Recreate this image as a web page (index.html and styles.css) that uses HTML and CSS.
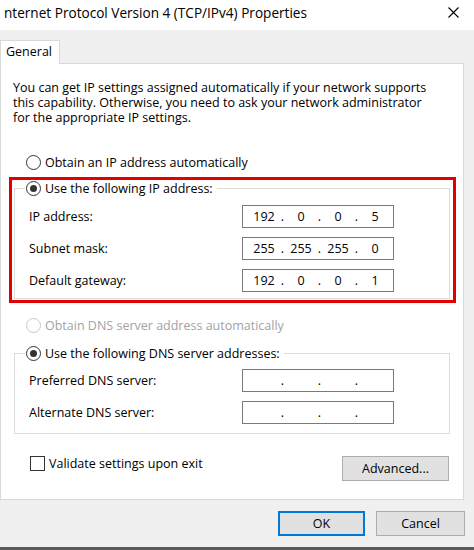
FILE: index.html
```html
<!DOCTYPE html>
<html>
<head>
<meta charset="utf-8">
<link rel="stylesheet" href="styles.css">
</head>
<body>
<div class="window">
  <div class="titlebar">
    <span class="title">nternet Protocol Version 4 (TCP/IPv4) Properties</span>
    <svg class="close" viewBox="0 0 11 11" width="11" height="11"><path d="M0.5 0.5L10.5 10.5M10.5 0.5L0.5 10.5" stroke="#000" stroke-width="1.1" fill="none"/></svg>
  </div>
  <div class="content">
    <div class="tabs"><div class="tab">General</div></div>
    <div class="panel">
      <p class="intro">You can get IP settings assigned automatically if your network supports<br>this capability. Otherwise, you need to ask your network administrator<br>for the appropriate IP settings.</p>
      <div class="radio-row obtain-ip"><span class="radio"></span><span>Obtain an IP address automatically</span></div>
      <div class="highlight">
        <fieldset class="group">
          <legend><span class="legend-inner"><span class="radio checked"></span><span>Use the following IP address:</span></span></legend>
          <div class="rows">
            <div class="field-row"><span class="label">IP address:</span>
              <div class="ipbox"><span class="oct">192</span><span class="dot">.</span><span class="oct">0</span><span class="dot">.</span><span class="oct">0</span><span class="dot">.</span><span class="oct">5</span></div></div>
            <div class="field-row"><span class="label">Subnet mask:</span>
              <div class="ipbox"><span class="oct">255</span><span class="dot">.</span><span class="oct">255</span><span class="dot">.</span><span class="oct">255</span><span class="dot">.</span><span class="oct">0</span></div></div>
            <div class="field-row"><span class="label">Default gateway:</span>
              <div class="ipbox"><span class="oct">192</span><span class="dot">.</span><span class="oct">0</span><span class="dot">.</span><span class="oct">0</span><span class="dot">.</span><span class="oct">1</span></div></div>
          </div>
        </fieldset>
      </div>
      <div class="radio-row obtain-dns disabled"><span class="radio"></span><span>Obtain DNS server address automatically</span></div>
      <fieldset class="group dns">
        <legend><span class="legend-inner"><span class="radio checked"></span><span>Use the following DNS server addresses:</span></span></legend>
        <div class="rows">
          <div class="field-row"><span class="label">Preferred DNS server:</span>
            <div class="ipbox"><span class="oct"></span><span class="dot">.</span><span class="oct"></span><span class="dot">.</span><span class="oct"></span><span class="dot">.</span><span class="oct"></span></div></div>
          <div class="field-row"><span class="label">Alternate DNS server:</span>
            <div class="ipbox"><span class="oct"></span><span class="dot">.</span><span class="oct"></span><span class="dot">.</span><span class="oct"></span><span class="dot">.</span><span class="oct"></span></div></div>
        </div>
      </fieldset>
      <div class="bottom-row">
        <div class="check-row"><span class="checkbox"></span><span>Validate settings upon exit</span></div>
        <button class="btn advanced">Advanced...</button>
      </div>
    </div>
    <div class="footer">
      <button class="btn ok">OK</button>
      <button class="btn cancel">Cancel</button>
    </div>
  </div>
</div>
</body>
</html>
```

FILE: styles.css
```css
* { box-sizing: border-box; }
html, body { margin: 0; padding: 0; }
body {
  width: 474px;
  height: 550px;
  overflow: hidden;
  background: #f0f0f0;
  font-family: "Open Sans", "Noto Sans", sans-serif;
  font-size: 12.5px;
  color: #000;
}
.window {
  width: 474px;
  height: 550px;
  display: flex;
  flex-direction: column;
  background: #f0f0f0;
  border-bottom: 3px solid #5a5a5a;
}
.titlebar {
  height: 30px;
  flex: none;
  background: #fff;
  display: flex;
  justify-content: space-between;
  align-items: flex-start;
  padding: 4px 15px 0 4px;
}
.title {
  font-size: 13.6px;
  line-height: 18px;
  white-space: nowrap;
}
.close {
  margin-top: 3px;
  display: block;
}
.content {
  flex: 1;
  padding-top: 10px;
}
.tabs {
  display: flex;
  height: 23px;
}
.tab {
  width: 60px;
  height: 24px;
  background: #fff;
  border: 1px solid #d9d9d9;
  border-bottom: none;
  padding-left: 5px;
  line-height: 22px;
  position: relative;
  z-index: 1;
}
.panel {
  width: 464px;
  height: 437px;
  background: #fff;
  border: 1px solid #d9d9d9;
}
.intro {
  margin: 16px 0 0 12px;
  line-height: 15px;
  white-space: nowrap;
}
.radio-row {
  display: flex;
  align-items: center;
  gap: 4px;
  height: 16px;
  white-space: nowrap;
}
.obtain-ip { margin: 29px 0 0 25px; }
.obtain-dns { margin: 14px 0 0 25px; }
.disabled { color: #a3a3a3; }
.disabled .radio { border-color: #c8c8c8; }
.radio {
  width: 15px;
  height: 15px;
  border: 1px solid #333;
  border-radius: 50%;
  background: #fff;
  display: flex;
  align-items: center;
  justify-content: center;
  flex: none;
}
.radio.checked::after {
  content: "";
  width: 7px;
  height: 7px;
  border-radius: 50%;
  background: #333;
}
.highlight {
  margin: 7px 0 0 8px;
  width: 447px;
  border: 3px solid #e50000;
  padding: 0 3px 1px 2px;
}
.group {
  margin: 0;
  width: 436px;
  min-width: 0;
  border: 1px solid #dcdcdc;
  padding: 9px 0 6px 14px;
}
.group legend {
  padding: 0 4px 0 1px;
  margin-left: -4px;
  height: 16px;
}
.legend-inner {
  display: flex;
  align-items: center;
  gap: 4px;
  height: 16px;
  white-space: nowrap;
}
.group.dns {
  margin: 12px 0 0 13px;
  padding: 8px 0 9px 14px;
}
.rows {
  display: flex;
  flex-direction: column;
  gap: 9px;
}
.field-row {
  display: flex;
  align-items: center;
  height: 23px;
}
.label {
  width: 213px;
  flex: none;
}
.ipbox {
  width: 152px;
  height: 23px;
  border: 1px solid #7a7a7a;
  background: #fff;
  display: flex;
  align-items: center;
  padding-left: 6px;
}
.oct {
  width: 30px;
  text-align: center;
}
.dot {
  width: 7px;
  text-align: center;
}
.bottom-row {
  display: flex;
  justify-content: space-between;
  align-items: flex-start;
  margin-top: 22px;
  padding: 0 14px 0 29px;
}
.check-row {
  display: flex;
  align-items: center;
  gap: 4px;
  height: 15px;
  white-space: nowrap;
}
.checkbox {
  width: 15px;
  height: 15px;
  border: 1px solid #333;
  background: #fff;
  flex: none;
}
.btn {
  font-family: "Open Sans", "Noto Sans", sans-serif;
  font-size: 12.5px;
  color: #000;
  background: #e1e1e1;
  border: 1px solid #adadad;
  height: 25px;
  padding: 0;
  margin: 0;
}
.advanced { width: 107px; }
.footer {
  display: flex;
  justify-content: flex-end;
  gap: 11px;
  padding: 11px 9px 0 0;
}
.ok {
  width: 87px;
  border: 2px solid #0078d7;
}
.cancel { width: 89px; }
```
